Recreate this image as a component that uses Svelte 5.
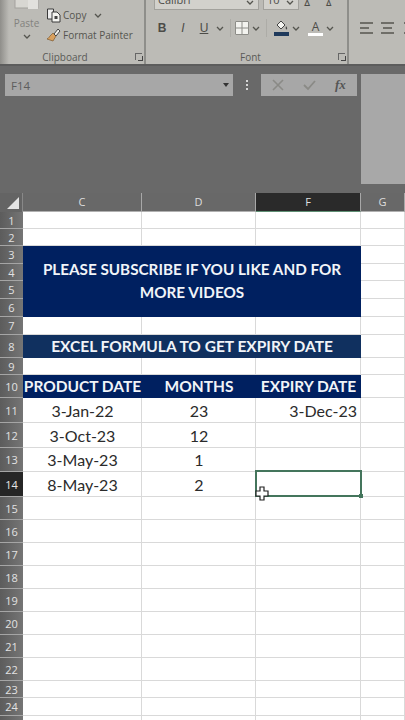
<script>
  const columns = ['C', 'D', 'F', 'G'];

  // row heights as they appear in the zoomed-in video frame
  const rows = [
    [1, 17], [2, 17], [3, 18], [4, 17], [5, 18], [6, 18], [7, 18], [8, 23], [9, 17], [10, 23],
    [11, 25], [12, 25], [13, 24], [14, 25], [15, 23], [16, 23], [17, 23], [18, 23], [19, 23],
    [20, 23], [21, 23], [22, 23], [23, 17], [24, 18], [25, 18]
  ];

  const table = [
    { row: 11, date: '3-Jan-22', months: '23', expiry: '3-Dec-23' },
    { row: 12, date: '3-Oct-23', months: '12', expiry: '' },
    { row: 13, date: '3-May-23', months: '1', expiry: '' },
    { row: 14, date: '8-May-23', months: '2', expiry: '' }
  ];

  const gridRows = '18.5px ' + rows.map((r) => r[1] + 'px').join(' ');
</script>

<div class="screen">
  <section class="ribbon">
    <div class="group clipboard">
      <div class="group-body">
        <div class="paste">
          <svg class="paste-icon" width="28" height="10" viewBox="0 0 28 10">
            <rect x="2" y="0" width="23" height="9" fill="#d8d7d2" stroke="#a3a29d" />
            <rect x="15" y="0" width="10" height="10" fill="#e2e1dd" />
          </svg>
          <span>Paste</span>
          <svg class="chev" width="8" height="5" viewBox="0 0 8 5"><path d="M1 1l3 3 3-3" /></svg>
        </div>
        <div class="clip-actions">
          <div class="action copy">
            <svg width="15" height="15" viewBox="0 0 15 15">
              <path d="M1.500 1h6v10h-6z" fill="#eee" stroke="#3a3a3a" />
              <path d="M6 4h5l3 3v7H6z" fill="#f4f4f0" stroke="#3a3a3a" />
              <rect x="8.500" y="8" width="3" height="3" fill="#444" />
            </svg>
            <span>Copy</span>
            <svg class="chev copy-chev" width="8" height="5" viewBox="0 0 8 5"><path d="M1 1l3 3 3-3" /></svg>
          </div>
          <div class="action">
            <svg width="15" height="15" viewBox="0 0 15 15">
              <path d="M7 5l3 3-3 5-6-2c2-1 2-2 3-3z" fill="#d9a05e" stroke="#7d5a30" stroke-width=".7" />
              <path d="M8 6l4-5 2 2-4 5z" fill="#f0efea" stroke="#444" />
            </svg>
            <span>Format Painter</span>
          </div>
        </div>
      </div>
      <div class="group-label"><span>Clipboard</span><i class="launcher"></i></div>
    </div>

    <div class="group font">
      <div class="group-body font-body">
        <div class="font-top">
          <div class="field name-field"><span>Calibri</span><svg class="chev" width="8" height="5" viewBox="0 0 8 5"><path d="M1 1l3 3 3-3" /></svg></div>
          <div class="field size-field"><span>10</span><svg class="chev" width="8" height="5" viewBox="0 0 8 5"><path d="M1 1l3 3 3-3" /></svg></div>
          <b class="grow">A</b>
          <b class="grow small">A</b>
        </div>
        <div class="font-tools">
          <b class="tool bold">B</b>
          <i class="tool italic">I</i>
          <u class="tool under">U</u>
          <svg class="chev" width="8" height="5" viewBox="0 0 8 5"><path d="M1 1l3 3 3-3" /></svg>
          <span class="sep first"></span>
          <svg class="borders" width="14" height="14" viewBox="0 0 14 14">
            <rect width="14" height="14" fill="#f3f3ef" />
            <path d="M7 0v14M0 7h14M.5.5h13v13H.5z" stroke="#8d8d88" fill="none" />
          </svg>
          <svg class="chev" width="8" height="5" viewBox="0 0 8 5"><path d="M1 1l3 3 3-3" /></svg>
          <span class="sep"></span>
          <svg class="fill" width="15" height="16" viewBox="0 0 15 16">
            <path d="M7 1l4 4-4 4-4-4z" fill="#f4f4f0" stroke="#444" />
            <path d="M12 6c1 1.500 1.500 2 1 3s-2 0-1-3z" fill="#444" />
            <rect y="12" width="15" height="4" fill="#1f3a5c" />
          </svg>
          <svg class="chev" width="8" height="5" viewBox="0 0 8 5"><path d="M1 1l3 3 3-3" /></svg>
          <span class="font-color"><b>A</b><i></i></span>
          <svg class="chev" width="8" height="5" viewBox="0 0 8 5"><path d="M1 1l3 3 3-3" /></svg>
        </div>
      </div>
      <div class="group-label"><span>Font</span><i class="launcher"></i></div>
    </div>

    <div class="group align">
      <svg width="58" height="12" viewBox="0 0 58 12">
        <path d="M0 1h13M0 6h9M0 11h13" stroke="#55554f" stroke-width="1.300" />
        <path d="M21 1h13M23 6h9M21 11h13" stroke="#55554f" stroke-width="1.300" />
        <path d="M44 1h13M48 6h9M44 11h13" stroke="#55554f" stroke-width="1.300" />
      </svg>
    </div>
  </section>

  <section class="formula-area">
    <div class="formula-row">
      <div class="name-box"><span>F14</span><i class="caret"></i></div>
      <div class="dots"><i></i><i></i><i></i></div>
      <div class="fx-box">
        <svg width="12" height="12" viewBox="0 0 12 12"><path d="M1 1l10 10M11 1L1 11" stroke="#8a8a86" stroke-width="1.600" /></svg>
        <svg width="13" height="12" viewBox="0 0 13 12"><path d="M1 6l4 4 7-8" stroke="#8a8a86" stroke-width="1.800" fill="none" /></svg>
        <em>fx</em>
      </div>
    </div>
    <div class="formula-input"></div>
  </section>

  <section class="sheet" style:grid-template-rows={gridRows}>
    <div class="corner"><svg width="12" height="12" viewBox="0 0 12 12"><path d="M12 0v12H0z" fill="#e4e4e4" /></svg></div>
    {#each columns as col, i}
      <div class="col-head" class:active={col === 'F'} style:grid-column={i + 2}>{col}</div>
    {/each}

    {#each rows as [num], r}
      <div class="row-head" class:active={num === 14} style:grid-row={r + 2}>{num}</div>
      {#each columns as _, c}
        <div class="cell" style:grid-row={r + 2} style:grid-column={c + 2}></div>
      {/each}
    {/each}

    <div class="banner">PLEASE SUBSCRIBE IF YOU LIKE AND FOR<br />MORE VIDEOS</div>
    <div class="title">EXCEL FORMULA TO GET EXPIRY DATE</div>

    <div class="th" style:grid-column="2">PRODUCT DATE</div>
    <div class="th" style:grid-column="3">MONTHS</div>
    <div class="th" style:grid-column="4">EXPIRY DATE</div>

    {#each table as t}
      <div class="td" style:grid-row={t.row + 1} style:grid-column="2">{t.date}</div>
      <div class="td" style:grid-row={t.row + 1} style:grid-column="3">{t.months}</div>
      {#if t.expiry}
        <div class="td right" style:grid-row={t.row + 1} style:grid-column="4">{t.expiry}</div>
      {/if}
    {/each}

    <div class="selected">
      <i class="handle"></i>
      <svg class="cursor" width="14" height="15" viewBox="0 0 14 15">
        <path d="M5 1h4v4h4v5H9v4H5v-4H1V5h4z" fill="#fff" stroke="#222" stroke-width="1.200" />
      </svg>
    </div>
  </section>
</div>

<style>
  :global(body) {
    margin: 0;
    background: #fff;
  }

  .screen {
    width: 405px;
    height: 720px;
    overflow: hidden;
    font-family: "Open Sans", "Liberation Sans", sans-serif;
    color: #4c4c48;
  }

  /* ribbon */
  .ribbon {
    height: 64px;
    display: flex;
    overflow: hidden;
    background: linear-gradient(90deg, #8f8e8a 0, #bcbbb6 9px);
    border-bottom: 2px solid #5c5c5c;
    box-sizing: content-box;
  }
  .group {
    flex: none;
    display: flex;
    flex-direction: column;
    box-sizing: border-box;
    height: 64px;
    border-right: 2px solid #8e8e8a;
  }
  .group-body {
    flex: 1;
    display: flex;
  }
  .group-label {
    height: 16px;
    display: flex;
    justify-content: center;
    align-items: flex-start;
    position: relative;
    font-size: 10px;
    line-height: 18px;
    color: #5a5a56;
  }
  .launcher {
    position: absolute;
    right: 2px;
    top: 5px;
    width: 6px;
    height: 6px;
    border: 1px solid #666;
    border-width: 1px 0 0 1px;
  }
  .launcher::after {
    content: "";
    position: absolute;
    right: -1px;
    bottom: -1px;
    width: 4px;
    height: 4px;
    border: solid #444;
    border-width: 0 1px 1px 0;
  }
  .chev {
    flex: none;
  }
  .chev path {
    fill: none;
    stroke: #55554f;
    stroke-width: 1.300;
  }

  .clipboard {
    width: 146px;
    padding: 0 0 0 13px;
  }
  .paste {
    width: 27px;
    display: flex;
    flex-direction: column;
    align-items: center;
    font-size: 10px;
    line-height: 12px;
    color: #83827e;
  }
  .paste-icon {
    margin: -1px 0 8px;
  }
  .paste .chev {
    margin-top: 5px;
  }
  .clip-actions {
    margin: 8px 0 0 6px;
    display: flex;
    flex-direction: column;
    gap: 5px;
  }
  .action {
    display: flex;
    align-items: center;
    gap: 2px;
    font-size: 10px;
    line-height: 15px;
    white-space: nowrap;
    color: #55554f;
  }
  .copy-chev {
    margin-left: 6px;
  }
  .clipboard .group-label {
    margin-left: -13px;
    padding-right: 14px;
  }

  .font {
    width: 203px;
    padding-left: 8px;
  }
  .font-body {
    flex-direction: column;
  }
  .font-top {
    height: 10px;
    display: flex;
    align-items: flex-end;
    gap: 4px;
  }
  .field {
    box-sizing: border-box;
    height: 18px;
    margin-top: -8px;
    flex: none;
    display: flex;
    align-items: flex-end;
    justify-content: space-between;
    padding: 0 4px 4px 3px;
    background: #d2d1cc;
    border: 1px solid #a2a19c;
    font-size: 11px;
    line-height: 11px;
  }
  .name-field {
    width: 105px;
  }
  .size-field {
    width: 36px;
  }
  .grow {
    align-self: flex-start;
    font-size: 13px;
    line-height: 8px;
    font-weight: 400;
    height: 6px;
    overflow: hidden;
  }
  .small {
    font-size: 11px;
    margin-left: 10px;
  }
  .font-tools {
    margin-top: 9px;
    display: flex;
    align-items: center;
    height: 18px;
  }
  .tool {
    width: 16px;
    margin-right: 5px;
    text-align: center;
    font-size: 12px;
    font-family: "Liberation Sans", sans-serif;
  }
  .bold {
    font-weight: 700;
  }
  .under {
    margin-right: 4px;
  }
  .sep {
    width: 1px;
    height: 18px;
    margin: 0 7px 0 6px;
    background: #adaca7;
  }
  .sep.first {
    margin-right: 4px;
  }
  .borders {
    margin: 0 3px 0 0;
  }
  .fill {
    margin-right: 3px;
  }
  .font-color {
    width: 15px;
    margin: 0 3px 0 8px;
    display: flex;
    flex-direction: column;
    align-items: center;
  }
  .font-color b {
    font-size: 12px;
    line-height: 12px;
    font-weight: 400;
  }
  .font-color i {
    width: 15px;
    height: 3px;
    background: #fff;
  }

  .align {
    width: 56px;
    border: 0;
    padding: 22px 0 0 11px;
  }

  /* formula bar and the dark band under it */
  .formula-area {
    height: 127px;
    display: flex;
    justify-content: space-between;
    background: #696969;
  }
  .formula-row {
    display: flex;
    align-items: flex-start;
    padding: 8px 0 0 5px;
  }
  .name-box {
    box-sizing: border-box;
    width: 228px;
    height: 22px;
    display: flex;
    align-items: center;
    justify-content: space-between;
    padding: 0 4px 0 6px;
    background: #a7a7a7;
    font-size: 11.500px;
    color: #5d5d5d;
  }
  .caret {
    border: 3.500px solid transparent;
    border-top: 4px solid #333;
    border-bottom: 0;
  }
  .dots {
    width: 28px;
    height: 22px;
    display: flex;
    flex-direction: column;
    align-items: center;
    justify-content: center;
    gap: 2px;
  }
  .dots i {
    width: 2px;
    height: 2px;
    background: #d6d6d6;
  }
  .fx-box {
    box-sizing: border-box;
    width: 96px;
    height: 22px;
    display: flex;
    align-items: center;
    gap: 19px;
    padding-left: 11px;
    background: #a7a7a7;
  }
  .fx-box em {
    font-family: "Liberation Serif", serif;
    font-size: 13px;
    font-weight: 700;
    color: #555;
  }
  .formula-input {
    width: 44px;
    height: 110px;
    margin-top: 8px;
    background: #a8a8a8;
  }

  /* sheet */
  .sheet {
    display: grid;
    grid-template-columns: 23px 119px 114px 105px 44px;
    background: #fff;
    font-family: Lato, "Open Sans", sans-serif;
  }
  .corner {
    grid-row: 1;
    grid-column: 1;
    display: flex;
    align-items: flex-end;
    justify-content: flex-end;
    padding: 0 3px 3px 0;
    background: #646464;
    border-right: 1px solid #888;
    box-sizing: border-box;
  }
  .col-head {
    grid-row: 1;
    display: flex;
    align-items: center;
    justify-content: center;
    box-sizing: border-box;
    background: #686868;
    border-right: 1px solid #a8a8a8;
    border-bottom: 1px solid #b0b0b0;
    font-family: "Open Sans", sans-serif;
    font-size: 11px;
    color: #ddd;
  }
  .col-head.active {
    background: #2a2a2a;
    color: #e0e0e0;
    border-bottom: 1px solid #5f8f74;
  }
  .row-head {
    grid-column: 1;
    display: flex;
    align-items: center;
    justify-content: center;
    padding-top: 1px;
    box-sizing: border-box;
    background: linear-gradient(90deg, #5c5c5c, #757575);
    border-bottom: 1px solid #a5a5a5;
    font-family: "Open Sans", sans-serif;
    font-size: 11px;
    color: #e2e2e2;
  }
  .row-head.active {
    background: #262626;
    color: #e6e6e6;
  }
  .cell {
    box-sizing: border-box;
    border-right: 1px solid #d9d9d9;
    border-bottom: 1px solid #d9d9d9;
  }

  .banner {
    grid-row: 4 / 8;
    grid-column: 2 / 5;
    align-self: stretch;
    padding-top: 12px;
    box-sizing: border-box;
    background: #002060;
    color: #f1f4f8;
    text-align: center;
    font-size: 15.250px;
    font-weight: 700;
    line-height: 23px;
    white-space: nowrap;
  }
  .title {
    grid-row: 9;
    grid-column: 2 / 5;
    display: flex;
    align-items: center;
    justify-content: center;
    background: #10305f;
    color: #f1f4f8;
    font-size: 15.500px;
    font-weight: 700;
    white-space: nowrap;
  }
  .th {
    grid-row: 11;
    display: flex;
    align-items: center;
    justify-content: center;
    background: #002060;
    color: #f1f4f8;
    font-size: 15.500px;
    font-weight: 700;
    white-space: nowrap;
  }
  .td {
    display: flex;
    align-items: center;
    justify-content: center;
    font-size: 16px;
    color: #2b2b2b;
  }
  .td.right {
    justify-content: flex-end;
    padding-right: 4px;
  }
  .selected {
    grid-row: 15;
    grid-column: 4;
    position: relative;
    box-sizing: border-box;
    margin: -2px -1px 0;
    border: 2px solid #44755c;
  }
  .handle {
    position: absolute;
    right: -3px;
    bottom: -3px;
    width: 4px;
    height: 4px;
    background: #44755c;
  }
  .cursor {
    position: absolute;
    left: -2px;
    top: 14px;
  }
</style>
